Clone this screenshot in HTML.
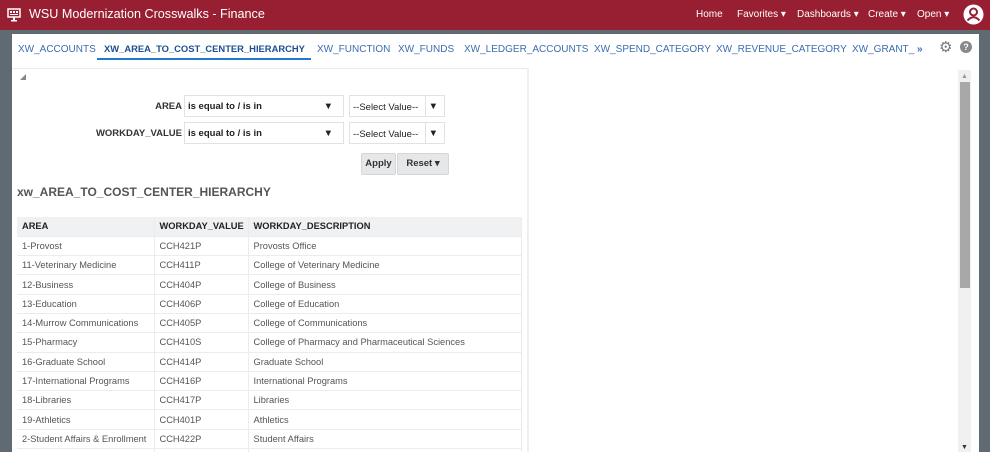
<!DOCTYPE html>
<html><head><style>
*{margin:0;padding:0;box-sizing:border-box}
html,body{width:990px;height:452px;overflow:hidden}
body{background:#5f6a72;font-family:"Liberation Sans",sans-serif;position:relative}
.hdr{position:absolute;left:0;top:0;width:990px;height:30px;background:#981e32;color:#fff}
.hdr .t{position:absolute;left:29px;top:7px;font-size:12.6px}
.nav{position:absolute;top:9px;font-size:10px}
.main{position:absolute;left:12px;top:34px;width:967px;height:418px;background:#fff;overflow:hidden}
.tab{position:absolute;top:10px;font-size:10px;color:#3b6db3;white-space:nowrap}
.sel{color:#1e4f91;font-weight:bold;font-size:9.4px;top:9px}
.a{position:absolute}
.lbl{font-size:9.5px;font-weight:bold;color:#333;text-align:right}
.dd{position:absolute;border:1px solid #e2e2e2;background:#fff;height:22px;font-size:9.5px;color:#222}
table{position:absolute;left:5px;top:183px;width:505px;border-collapse:collapse;font-size:9.3px;color:#555;table-layout:fixed}
td,th{height:19.3px;padding:0 5px;text-align:left;border-bottom:1px solid #ececec;border-right:1px solid #ececec;white-space:nowrap;overflow:hidden}
th{background:#f0f1f3;color:#222;font-size:9.3px}
</style></head><body>
<div class="hdr">
<svg class="a" style="left:7px;top:8px" width="14" height="14" viewBox="0 0 14 14"><rect x="1" y="1" width="12" height="8" fill="none" stroke="#fff" stroke-width="1.5"/><rect x="3" y="3" width="2" height="2" fill="#fff"/><rect x="6" y="3" width="2" height="2" fill="#fff"/><rect x="9" y="3" width="2" height="2" fill="#fff"/><rect x="3" y="6" width="8" height="1" fill="#fff"/><rect x="6" y="9" width="2" height="3" fill="#fff"/><rect x="4" y="12" width="6" height="1.5" fill="#fff"/></svg>
<div class="t">WSU Modernization Crosswalks - Finance</div>
<div class="nav" style="left:696px">Home</div>
<div class="nav" style="left:737px">Favorites ▾</div>
<div class="nav" style="left:797px">Dashboards ▾</div>
<div class="nav" style="left:868px">Create ▾</div>
<div class="nav" style="left:917px">Open ▾</div>
<svg class="a" style="left:963px;top:4px" width="21" height="21" viewBox="0 0 21 21"><circle cx="10.5" cy="10.5" r="10" fill="#fff"/><circle cx="10.5" cy="8" r="3.5" fill="none" stroke="#981e32" stroke-width="2"/><path d="M4.5 16.5 Q10.5 10 16.5 16.5" fill="none" stroke="#981e32" stroke-width="2"/></svg>
</div>
<div class="main">
<div class="tab" style="left:6px">XW_ACCOUNTS</div>
<div class="tab sel" style="left:92px">XW_AREA_TO_COST_CENTER_HIERARCHY</div>
<div class="a" style="left:85px;top:24px;width:214px;height:2px;background:#1f7ad1"></div>
<div class="tab" style="left:305px">XW_FUNCTION</div>
<div class="tab" style="left:386px">XW_FUNDS</div>
<div class="tab" style="left:452px">XW_LEDGER_ACCOUNTS</div>
<div class="tab" style="left:582px">XW_SPEND_CATEGORY</div>
<div class="tab" style="left:704px">XW_REVENUE_CATEGORY</div>
<div class="tab" style="left:840px">XW_GRANT_ <b style="font-size:10px">»</b></div>
<div class="a" style="left:927px;top:4px;font-size:15px;color:#777">⚙</div>
<div class="a" style="left:948px;top:7px;width:12px;height:12px;border-radius:50%;background:#888;color:#fff;font-size:9px;font-weight:bold;text-align:center;line-height:12px">?</div>
<div class="a" style="left:0;top:34px;width:516px;height:1px;background:#e8e9eb"></div>
<div class="a" style="left:515px;top:34px;width:2px;height:384px;background:#eeeff1"></div>
<div class="a" style="left:8px;top:40px;width:0;height:0;border-left:6px solid transparent;border-bottom:6px solid #888"></div>
<div class="a lbl" style="left:100px;top:67px;width:70px">AREA</div>
<div class="a lbl" style="left:60px;top:94px;width:110px">WORKDAY_VALUE</div>
<div class="dd" style="left:172px;top:61px;width:160px;font-weight:bold;padding:5px 3px">is equal to / is in<span style="position:absolute;right:10px;top:5px">▼</span></div>
<div class="dd" style="left:337px;top:61px;width:96px;padding:6px 3px">--Select Value--<span style="position:absolute;right:18px;top:-1px;width:1px;height:22px;background:#e2e2e2"></span><span style="position:absolute;right:6px;top:5px">▼</span></div>
<div class="dd" style="left:172px;top:88px;width:160px;font-weight:bold;padding:5px 3px">is equal to / is in<span style="position:absolute;right:10px;top:5px">▼</span></div>
<div class="dd" style="left:337px;top:88px;width:96px;padding:6px 3px">--Select Value--<span style="position:absolute;right:18px;top:-1px;width:1px;height:22px;background:#e2e2e2"></span><span style="position:absolute;right:6px;top:5px">▼</span></div>
<div class="a" style="left:349px;top:119px;width:35px;height:22px;background:#e6e7e9;border:1px solid #d6d6d6;border-radius:2px;font-size:9.5px;font-weight:bold;color:#333;text-align:center;line-height:20px">Apply</div>
<div class="a" style="left:385px;top:119px;width:52px;height:22px;background:#e6e7e9;border:1px solid #d6d6d6;border-radius:2px;font-size:9.5px;font-weight:bold;color:#333;text-align:center;line-height:20px">Reset ▾</div>
<div class="a" style="left:5px;top:151px;font-size:12px;font-weight:bold;color:#555">xw_AREA_TO_COST_CENTER_HIERARCHY</div>
<table>
<colgroup><col style="width:137px"><col style="width:94px"><col></colgroup>
<tr><th>AREA</th><th>WORKDAY_VALUE</th><th>WORKDAY_DESCRIPTION</th></tr>
<tr><td>1-Provost</td><td>CCH421P</td><td>Provosts Office</td></tr>
<tr><td>11-Veterinary Medicine</td><td>CCH411P</td><td>College of Veterinary Medicine</td></tr>
<tr><td>12-Business</td><td>CCH404P</td><td>College of Business</td></tr>
<tr><td>13-Education</td><td>CCH406P</td><td>College of Education</td></tr>
<tr><td>14-Murrow Communications</td><td>CCH405P</td><td>College of Communications</td></tr>
<tr><td>15-Pharmacy</td><td>CCH410S</td><td>College of Pharmacy and Pharmaceutical Sciences</td></tr>
<tr><td>16-Graduate School</td><td>CCH414P</td><td>Graduate School</td></tr>
<tr><td>17-International Programs</td><td>CCH416P</td><td>International Programs</td></tr>
<tr><td>18-Libraries</td><td>CCH417P</td><td>Libraries</td></tr>
<tr><td>19-Athletics</td><td>CCH401P</td><td>Athletics</td></tr>
<tr><td>2-Student Affairs &amp; Enrollment</td><td>CCH422P</td><td>Student Affairs</td></tr>
<tr><td>&nbsp;</td><td></td><td></td></tr>
</table>
<div class="a" style="left:946px;top:36px;width:13px;height:382px;background:#f0f0f0"></div>
<div class="a" style="left:948px;top:48px;width:10px;height:206px;background:#a8a8a8"></div>
<div class="a" style="left:949px;top:39px;font-size:7px;color:#999">▲</div>
<div class="a" style="left:949px;top:410px;font-size:7px;color:#333">▼</div>
</div>
</body></html>
